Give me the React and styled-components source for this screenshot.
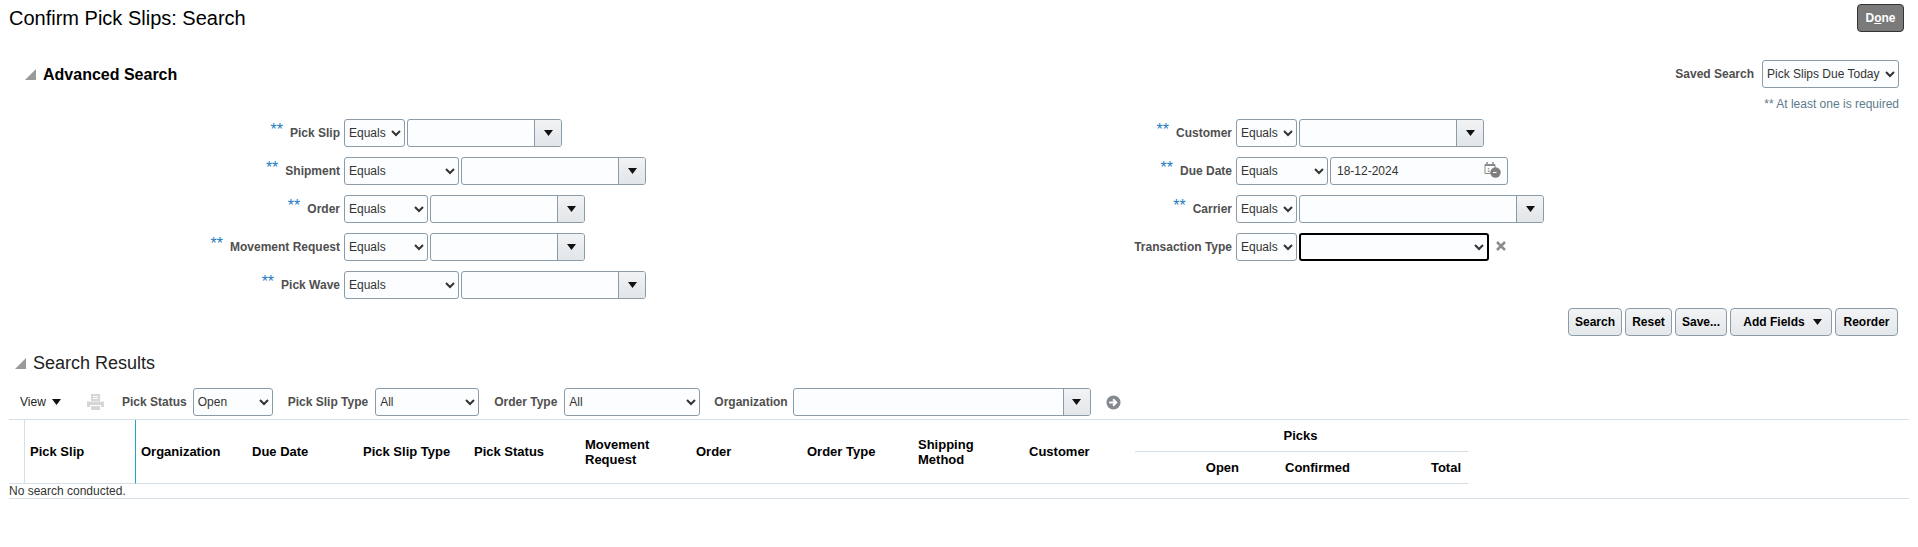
import React from 'react';
import styled, { createGlobalStyle } from 'styled-components';

const GlobalStyle = createGlobalStyle`
  body {
    margin: 0;
    background: #fff;
    font-family: "Liberation Sans", Arial, sans-serif;
    font-size: 12px;
    color: #333;
  }
`;

const Page = styled.div`
  width: 1918px;
  height: 547px;
  overflow: hidden;
`;

const TitleBar = styled.div`
  display: flex;
  justify-content: space-between;
  align-items: flex-start;
  height: 60px;
  padding: 4px 14px 0 9px;
  box-sizing: border-box;
`;

const PageTitle = styled.h1`
  margin: 0;
  font-size: 20px;
  line-height: 28px;
  font-weight: 400;
  color: #000;
`;

const DoneButton = styled.button`
  width: 47px;
  height: 28px;
  padding: 0;
  font: bold 12px "Liberation Sans", Arial, sans-serif;
  color: #fff;
  background: #7a7a7a;
  border: 1px solid #333;
  border-radius: 4px;
  u { text-decoration-thickness: 1px; }
`;

const SectionBar = styled.div`
  display: flex;
  justify-content: space-between;
  align-items: center;
  height: 28px;
  padding: 0 19px 0 25px;
`;

const SectionTitle = styled.div`
  display: flex;
  align-items: center;
  gap: 7px;
  padding-top: 1px;
  font-size: 16px;
  font-weight: bold;
  color: #000;
`;

const SavedSearch = styled.div`
  display: flex;
  align-items: center;
  gap: 8px;
  font-weight: bold;
  color: #4f4f4f;
`;

const RequiredNote = styled.div`
  height: 31px;
  padding: 9px 19px 0 0;
  box-sizing: border-box;
  text-align: right;
  color: #5c7b8c;
`;

const FormColumns = styled.div`
  display: grid;
  grid-template-columns: 892px 1fr;
`;

const FormColumn = styled.div`
  display: flex;
  flex-direction: column;
  gap: 10px;
`;

const FormRow = styled.div`
  display: flex;
  align-items: center;
  height: 28px;
`;

const Label = styled.label`
  display: flex;
  justify-content: flex-end;
  align-items: center;
  gap: 7px;
  width: 340px;
  margin-right: 4px;
  font-weight: bold;
  color: #4f4f4f;
`;

const Stars = styled.span`
  position: relative;
  top: -3px;
  font-size: 16px;
  line-height: 14px;
  font-weight: 400;
  color: #1f7bc0;
`;

const Select = styled.select`
  width: ${p => p.$width}px;
  height: 28px;
  margin: 0;
  padding: 0;
  font: 12px "Liberation Sans", Arial, sans-serif;
  color: #333;
  background-color: #fcfdfe;
  border: ${p => (p.$focused ? '2px solid #000' : '1px solid #8b9ba8')};
  border-radius: 3px;
  box-sizing: border-box;
  flex: none;
`;

const SpacedSelect = styled(Select)`
  margin-left: 2px;
`;

const Combo = styled.div`
  display: flex;
  width: ${p => p.$width}px;
  height: 28px;
  box-sizing: border-box;
  margin-left: ${p => p.$gap ?? 2}px;
  background: #fcfdfe;
  border: 1px solid #8b9ba8;
  border-radius: 3px;
  flex: none;
`;

const ComboInput = styled.input`
  flex: 1;
  min-width: 0;
  padding: 0 6px;
  border: 0;
  background: transparent;
  font: 12px "Liberation Sans", Arial, sans-serif;
  color: #333;
  outline: none;
`;

const ComboButton = styled.div`
  display: flex;
  justify-content: center;
  align-items: center;
  width: 26px;
  border-left: 1px solid #8b9ba8;
  border-radius: 0 2px 2px 0;
  background: linear-gradient(#f1f3f5, #e2e6e9);
`;

const CalendarSlot = styled.div`
  display: flex;
  align-items: center;
  padding: 0 6px 3px 0;
`;

const RemoveIcon = styled.svg`
  width: 10px;
  height: 10px;
  margin: -2px 0 0 7px;
`;

const ActionBar = styled.div`
  display: flex;
  justify-content: flex-end;
  gap: 3px;
  margin-top: 9px;
  padding-right: 20px;
`;

const ActionButton = styled.button`
  display: flex;
  justify-content: center;
  align-items: center;
  gap: 8px;
  width: ${p => p.$width}px;
  height: 28px;
  padding: 0 0 0 ${p => p.$indent || 0}px;
  font: bold 12px "Liberation Sans", Arial, sans-serif;
  color: #000;
  background: linear-gradient(#f1f3f5, #e4e8ea);
  border: 1px solid #8b9ba8;
  border-radius: 4px;
`;

const ResultsBar = styled.div`
  display: flex;
  align-items: center;
  gap: 7px;
  height: 22px;
  margin-top: 16px;
  padding-left: 15px;
  font-size: 18px;
  color: #222;
`;

const Toolbar = styled.div`
  display: flex;
  align-items: center;
  height: 28px;
  margin-top: 14px;
  padding-left: 20px;
`;

const ViewMenu = styled.div`
  display: flex;
  align-items: center;
  gap: 6px;
  width: 67px;
  color: #222;
`;

const PrintSlot = styled.div`
  display: flex;
  width: 35px;
`;

const ToolLabel = styled.span`
  margin-right: ${p => p.$gap || 7}px;
  font-weight: bold;
  color: #4f4f4f;
`;

const ToolGroup = styled.div`
  display: flex;
  align-items: center;
  margin-right: ${p => p.$after}px;
`;

const GoIcon = styled.svg`
  width: 15px;
  height: 15px;
  margin-left: 15px;
`;

const TableFrame = styled.div`
  margin: 3px 9px 0;
  border-top: 1px solid #d6dfe6;
`;

const HeaderTable = styled.table`
  width: 1459px;
  border-collapse: separate;
  border-spacing: 0;
  table-layout: fixed;
`;

const Heading = styled.th`
  padding: 0 7px 0 5px;
  height: 31px;
  text-align: ${p => p.$align || 'left'};
  font: bold 13px/15px "Liberation Sans", Arial, sans-serif;
  color: #000;
  border-bottom: 1px solid #d6dfe6;
  border-right: ${p => (p.$frozen ? '1px solid #1ea6c4' : '0')};
  border-left: ${p => (p.$frozen ? '1px solid #d6dfe6' : '0')};
`;

const EmptyRow = styled.div`
  height: 14px;
  line-height: 14px;
  color: #333;
  border-bottom: 1px solid #d6dfe6;
`;

const DownArrow = () => (
  <svg width="9" height="6" viewBox="0 0 9 6"><path d="M0 0h9L4.500 6z" fill="#111" /></svg>
);

const Disclosure = () => (
  <svg width="11" height="11" viewBox="0 0 11 11"><path d="M11 0v11H0z" fill="#9a9a9a" /></svg>
);

const CalendarIcon = () => (
  <svg width="17" height="17" viewBox="0 0 17 17">
    <path d="M1 3.500h10v9H1z" fill="#fff" stroke="#8a8a8a" />
    <path d="M3 1v3M9 1v3" stroke="#8a8a8a" strokeWidth="1.500" />
    <path d="M1 3h10v2H1z" fill="#8a8a8a" />
    <text x="3" y="11" fontSize="6" fontFamily="Liberation Sans" fill="#777">1</text>
    <circle cx="11.500" cy="11.500" r="5.200" fill="#7f7f7f" />
    <path d="M9 11.500h3.500" fill="none" stroke="#fff" />
  </svg>
);

const PrintIcon = () => (
  <svg width="17" height="16" viewBox="0 0 17 16">
    <path d="M4 0h9v7H4z" fill="#d6d6d6" />
    <path d="M6 2.500h5M6 4.500h5" stroke="#fff" />
    <path d="M0 7.500h17V13h-3v-2H3v2H0z" fill="#d6d6d6" />
    <path d="M4 12h9v4H4z" fill="#d6d6d6" />
  </svg>
);

const Lookup = ({ width, gap }) => (
  <Combo $width={width} $gap={gap}>
    <ComboInput />
    <ComboButton><DownArrow /></ComboButton>
  </Combo>
);

const Equals = ({ width }) => (
  <Select $width={width} defaultValue="Equals">
    <option>Equals</option>
  </Select>
);

const Field = ({ label, required = true, children }) => (
  <FormRow>
    <Label>
      {required && <Stars>**</Stars>}
      <span>{label}</span>
    </Label>
    {children}
  </FormRow>
);

const columns = ['Organization', 'Due Date', 'Pick Slip Type', 'Pick Status', 'Movement Request', 'Order', 'Order Type', 'Shipping Method', 'Customer'];

export default function App() {
  return (
    <Page>
      <GlobalStyle />
      <TitleBar>
        <PageTitle>Confirm Pick Slips: Search</PageTitle>
        <DoneButton>D<u>o</u>ne</DoneButton>
      </TitleBar>

      <SectionBar>
        <SectionTitle><Disclosure />Advanced Search</SectionTitle>
        <SavedSearch>
          Saved Search
          <Select $width={137} defaultValue="Pick Slips Due Today">
            <option>Pick Slips Due Today</option>
          </Select>
        </SavedSearch>
      </SectionBar>
      <RequiredNote>** At least one is required</RequiredNote>

      <FormColumns>
        <FormColumn>
          <Field label="Pick Slip"><Equals width={61} /><Lookup width={155} /></Field>
          <Field label="Shipment"><Equals width={115} /><Lookup width={185} /></Field>
          <Field label="Order"><Equals width={84} /><Lookup width={155} /></Field>
          <Field label="Movement Request"><Equals width={84} /><Lookup width={155} /></Field>
          <Field label="Pick Wave"><Equals width={115} /><Lookup width={185} /></Field>
        </FormColumn>
        <FormColumn>
          <Field label="Customer"><Equals width={61} /><Lookup width={185} /></Field>
          <Field label="Due Date">
            <Equals width={92} />
            <Combo $width={178}>
              <ComboInput defaultValue="18-12-2024" />
              <CalendarSlot><CalendarIcon /></CalendarSlot>
            </Combo>
          </Field>
          <Field label="Carrier"><Equals width={61} /><Lookup width={245} /></Field>
          <Field label="Transaction Type" required={false}>
            <Equals width={61} />
            <SpacedSelect $width={190} $focused><option /></SpacedSelect>
            <RemoveIcon viewBox="0 0 10 10">
              <path d="M1 1l8 8M9 1l-8 8" stroke="#8c8c8c" strokeWidth="2.500" />
            </RemoveIcon>
          </Field>
        </FormColumn>
      </FormColumns>

      <ActionBar>
        <ActionButton $width={54}>Search</ActionButton>
        <ActionButton $width={47}>Reset</ActionButton>
        <ActionButton $width={52}>Save...</ActionButton>
        <ActionButton $width={102} $indent={3}>Add Fields <DownArrow /></ActionButton>
        <ActionButton $width={63}>Reorder</ActionButton>
      </ActionBar>

      <ResultsBar><Disclosure />Search Results</ResultsBar>

      <Toolbar>
        <ViewMenu>View <DownArrow /></ViewMenu>
        <PrintSlot><PrintIcon /></PrintSlot>
        <ToolGroup $after={15}>
          <ToolLabel $gap={6}>Pick Status</ToolLabel>
          <Select $width={80} defaultValue="Open"><option>Open</option></Select>
        </ToolGroup>
        <ToolGroup $after={15}>
          <ToolLabel>Pick Slip Type</ToolLabel>
          <Select $width={104} defaultValue="All"><option>All</option></Select>
        </ToolGroup>
        <ToolGroup $after={14}>
          <ToolLabel>Order Type</ToolLabel>
          <Select $width={136} defaultValue="All"><option>All</option></Select>
        </ToolGroup>
        <ToolGroup $after={0}>
          <ToolLabel $gap={5}>Organization</ToolLabel>
          <Lookup width={298} gap={0} />
        </ToolGroup>
        <GoIcon viewBox="0 0 16 16">
          <circle cx="8" cy="8" r="7.500" fill="#83898e" />
          <path d="M3.500 8h7M7.500 4.500L11 8l-3.500 3.500" fill="none" stroke="#fff" strokeWidth="2" />
        </GoIcon>
      </Toolbar>

      <TableFrame>
        <HeaderTable>
          <colgroup>
            <col style={{ width: 15 }} />
            <col style={{ width: 112 }} />
            {columns.map(name => <col key={name} style={{ width: 111 }} />)}
            <col style={{ width: 111 }} />
            <col style={{ width: 111 }} />
            <col style={{ width: 111 }} />
          </colgroup>
          <thead>
            <tr>
              <Heading rowSpan={2} />
              <Heading rowSpan={2} $frozen>Pick Slip</Heading>
              {columns.map(name => <Heading key={name} rowSpan={2}>{name}</Heading>)}
              <Heading colSpan={3} $align="center">Picks</Heading>
            </tr>
            <tr>
              <Heading $align="right">Open</Heading>
              <Heading $align="right">Confirmed</Heading>
              <Heading $align="right">Total</Heading>
            </tr>
          </thead>
        </HeaderTable>
        <EmptyRow>No search conducted.</EmptyRow>
      </TableFrame>
    </Page>
  );
}
